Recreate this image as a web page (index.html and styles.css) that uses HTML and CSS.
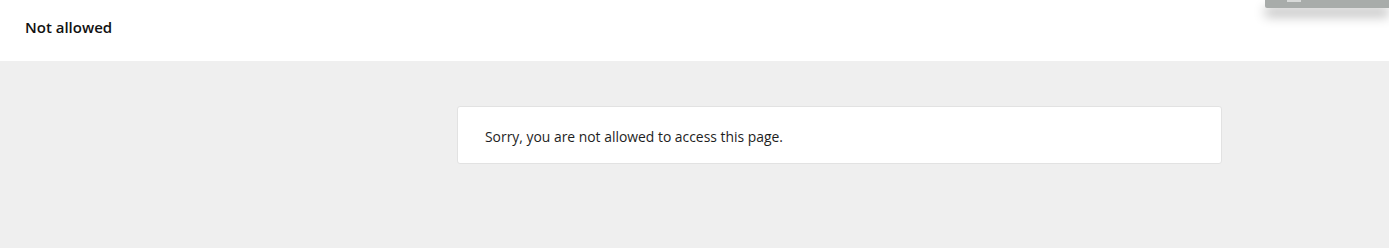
FILE: index.html
```html
<!DOCTYPE html>
<html>
<head>
<meta charset="utf-8">
<link rel="stylesheet" href="styles.css">
</head>
<body>
<header class="topbar">
  <h1 class="title">Not allowed</h1>
  <div class="menu-edge"><div class="menu-edge-hl"></div></div>
</header>
<main class="content">
  <div class="card">
    <p class="message">Sorry, you are not allowed to access this page.</p>
  </div>
</main>
</body>
</html>
```
FILE: styles.css
```css
html, body {
  margin: 0;
  padding: 0;
  height: 100%;
}
body {
  background: #efefef;
  font-family: "Open Sans", "Noto Sans", "DejaVu Sans", sans-serif;
  color: #1e1e1e;
  overflow: hidden;
}
.topbar {
  position: relative;
  height: 61px;
  background: #ffffff;
  display: flex;
  align-items: center;
  padding-left: 25px;
}
.title {
  margin: 0;
  font-size: 15px;
  font-weight: 600;
  color: #111;
  position: relative;
  top: -4px;
}
.menu-edge {
  position: absolute;
  right: 0;
  top: 0;
  width: 124px;
  height: 8px;
  background: #a8acaa;
  box-shadow: 0 8px 12px rgba(0,0,0,0.3);
  border-bottom-left-radius: 2px;
}
.menu-edge-hl {
  position: absolute;
  left: 22px;
  top: 0;
  width: 14px;
  height: 2px;
  background: #d8dad9;
}
.content {
  display: flex;
  justify-content: flex-start;
  padding: 45px 0 0 457px;
}
.card {
  width: 736px;
  height: 56px;
  background: #fff;
  border: 1px solid #e2e2e2;
  border-radius: 3px;
  display: flex;
  align-items: center;
  padding-left: 27px;
  box-sizing: content-box;
}
.message {
  margin: 0;
  font-size: 13.9px;
  color: #1e1e1e;
  position: relative;
  top: 1px;
}
```
